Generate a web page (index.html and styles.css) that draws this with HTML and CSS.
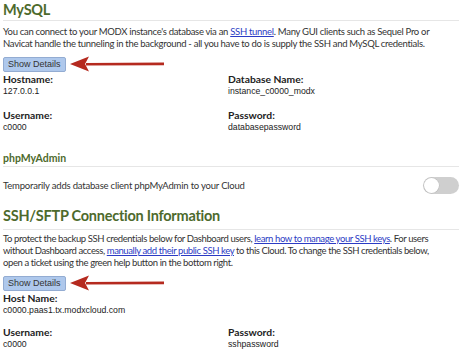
FILE: index.html
```html
<!DOCTYPE html>
<html lang="en">
<head>
  <meta charset="UTF-8">
  <title>MySQL / SSH Connection</title>
  <link rel="stylesheet" href="styles.css">
</head>
<body>
  <div class="panel">
    <h2 class="section-title">MySQL</h2>
    <p class="intro">You can connect to your MODX instance's database via an <a href="#">SSH tunnel</a>. Many GUI clients such as Sequel Pro or Navicat handle the tunneling in the background - all you have to do is supply the SSH and MySQL credentials.</p>

    <div class="details-row">
      <button class="details-btn">Show Details</button>
      <svg class="arrow" width="94" height="16" viewBox="0 0 94 16">
        <path d="M16 7 L94 6.4 L94 9.2 L16 9.4 Z" fill="#b52a1f"/>
        <path d="M0 8 L19 0.5 L15 8 L19 15.5 Z" fill="#b52a1f"/>
      </svg>
    </div>

    <div class="creds">
      <div class="cred">
        <div class="cred-label">Hostname:</div>
        <div class="cred-value">127.0.0.1</div>
      </div>
      <div class="cred">
        <div class="cred-label">Database Name:</div>
        <div class="cred-value">instance_c0000_modx</div>
      </div>
      <div class="cred">
        <div class="cred-label">Username:</div>
        <div class="cred-value">c0000</div>
      </div>
      <div class="cred">
        <div class="cred-label">Password:</div>
        <div class="cred-value">databasepassword</div>
      </div>
    </div>

    <h3 class="sub-title">phpMyAdmin</h3>
    <div class="toggle-row">
      <span>Temporarily adds database client phpMyAdmin to your Cloud</span>
      <span class="toggle"><span class="knob"></span></span>
    </div>

    <h2 class="section-title ssh">SSH/SFTP Connection Information</h2>
    <p class="intro ssh-intro">To protect the backup SSH credentials below for Dashboard users, <a href="#">learn how to manage your SSH keys</a>. For users without Dashboard access, <a href="#">manually add their public SSH key</a> to this Cloud. To change the SSH credentials below,<br>open a ticket using the green help button in the bottom right.</p>

    <div class="details-row">
      <button class="details-btn">Show Details</button>
      <svg class="arrow" width="94" height="16" viewBox="0 0 94 16">
        <path d="M16 7 L94 6.4 L94 9.2 L16 9.4 Z" fill="#b52a1f"/>
        <path d="M0 8 L19 0.5 L15 8 L19 15.5 Z" fill="#b52a1f"/>
      </svg>
    </div>

    <div class="creds tight">
      <div class="cred wide">
        <div class="cred-label">Host Name:</div>
        <div class="cred-value">c0000.paas1.tx.modxcloud.com</div>
      </div>
      <div class="cred">
        <div class="cred-label">Username:</div>
        <div class="cred-value">c0000</div>
      </div>
      <div class="cred">
        <div class="cred-label">Password:</div>
        <div class="cred-value">sshpassword</div>
      </div>
    </div>
  </div>
</body>
</html>
```

FILE: styles.css
```css
body {
  margin: 0;
  background: #fff;
  font-family: Lato, "Open Sans", sans-serif;
  color: #333;
}
.panel {
  width: 456px;
  padding-left: 3px;
}
.section-title {
  margin: 0;
  padding: 1px 0 2px;
  font-size: 14.5px;
  line-height: 17px;
  font-weight: 700;
  letter-spacing: -0.25px;
  color: #4d6a2c;
  border-bottom: 1px solid #e6e6e6;
}
.section-title.ssh {
  margin-top: 11px;
  padding: 2px 0 5px;
}
.intro {
  margin: 5px 0 0;
  font-size: 9.5px;
  letter-spacing: -0.3px;
  line-height: 12px;
  color: #333;
}
.intro.ssh-intro {
  margin-top: 3px;
  letter-spacing: -0.4px;
}
.intro a {
  color: #2b3bc4;
}
.details-row {
  display: flex;
  align-items: center;
  margin-top: 6px;
  gap: 4px;
}
.details-btn {
  font-family: "Liberation Sans", Arial, sans-serif;
  font-size: 9px;
  color: #333;
  background: #aec8ec;
  border: 1px solid #93acd2;
  border-radius: 2px;
  padding: 0 4px;
  height: 15px;
  line-height: 13px;
}
.arrow {
  display: block;
}
.creds {
  display: grid;
  grid-template-columns: 225px 1fr;
  row-gap: 12px;
  margin-top: 1px;
}
.creds.tight {
  row-gap: 10px;
}
.cred.wide {
  grid-column: 1 / 3;
}
.cred-label {
  font-size: 10.3px;
  font-weight: 700;
  color: #222;
  line-height: 12px;
}
.cred-value {
  font-family: "Liberation Sans", Arial, sans-serif;
  font-size: 8.7px;
  line-height: 12px;
  color: #222;
}
.sub-title {
  margin: 18px 0 0;
  font-size: 10.5px;
  line-height: 14px;
  font-weight: 700;
  color: #4d6a2c;
  border-bottom: 1px solid #e6e6e6;
  padding-bottom: 1px;
}
.toggle-row {
  display: flex;
  justify-content: space-between;
  align-items: center;
  margin-top: 10px;
  font-size: 9.5px;
  letter-spacing: -0.2px;
}
.toggle {
  display: flex;
  align-items: center;
  width: 36px;
  height: 17px;
  border-radius: 9px;
  background: #cfcfcf;
  box-sizing: border-box;
  padding: 1px;
}
.knob {
  width: 15px;
  height: 15px;
  border-radius: 50%;
  background: #fff;
  box-shadow: 0 0 0 0.5px #bbb;
}
```
